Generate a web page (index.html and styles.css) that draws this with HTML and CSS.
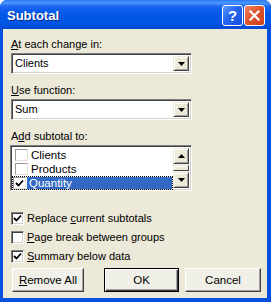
FILE: index.html
```html
<!DOCTYPE html>
<html lang="en">
<head>
  <meta charset="UTF-8" />
  <title>Subtotal</title>
  <link rel="stylesheet" href="styles.css">
</head>
<body>
  <div class="window">
    <div class="titlebar">
      <span class="title">Subtotal</span>
      <div class="title-buttons">
        <span class="tbtn help">?</span>
        <span class="tbtn close">
          <svg width="11" height="11" viewBox="0 0 11 11"><path d="M1.5 1.5 L9.5 9.5 M9.5 1.5 L1.5 9.5" stroke="#fff" stroke-width="2.2" stroke-linecap="square" fill="none"/></svg>
        </span>
      </div>
    </div>

    <div class="dialog">
      <div class="field-label first"><u>A</u>t each change in:</div>
      <div class="combo">
        <span class="combo-text">Clients</span>
        <span class="combo-arrow"><svg width="7" height="4" viewBox="0 0 7 4"><path d="M0 0 H7 L3.5 4 Z" fill="#000"/></svg></span>
      </div>

      <div class="field-label"><u>U</u>se function:</div>
      <div class="combo">
        <span class="combo-text">Sum</span>
        <span class="combo-arrow"><svg width="7" height="4" viewBox="0 0 7 4"><path d="M0 0 H7 L3.5 4 Z" fill="#000"/></svg></span>
      </div>

      <div class="field-label">A<u>d</u>d subtotal to:</div>
      <div class="listbox">
        <div class="list-items">
          <div class="list-row"><span class="lbox"></span><span class="item-text">Clients</span></div>
          <div class="list-row"><span class="lbox"></span><span class="item-text">Products</span></div>
          <div class="list-row selected">
            <span class="lbox"><svg width="9" height="9" viewBox="0 0 9 9"><path d="M1 4 L3.5 6.5 L8 1.5" stroke="#000" stroke-width="1.8" fill="none"/></svg></span>
            <span class="item-text">Quantity</span>
          </div>
        </div>
        <div class="scrollbar">
          <span class="sb-btn"><svg width="7" height="4" viewBox="0 0 7 4"><path d="M0 4 H7 L3.5 0 Z" fill="#000"/></svg></span>
          <span class="sb-track"><span class="sb-thumb"></span></span>
          <span class="sb-btn"><svg width="7" height="4" viewBox="0 0 7 4"><path d="M0 0 H7 L3.5 4 Z" fill="#000"/></svg></span>
        </div>
      </div>

      <div class="options">
        <div class="option">
          <span class="cbox"><svg width="9" height="9" viewBox="0 0 9 9"><path d="M1 4 L3.5 6.5 L8 1.5" stroke="#000" stroke-width="1.8" fill="none"/></svg></span>
          <span class="option-text">Replace <u>c</u>urrent subtotals</span>
        </div>
        <div class="option">
          <span class="cbox"></span>
          <span class="option-text"><u>P</u>age break between groups</span>
        </div>
        <div class="option">
          <span class="cbox"><svg width="9" height="9" viewBox="0 0 9 9"><path d="M1 4 L3.5 6.5 L8 1.5" stroke="#000" stroke-width="1.8" fill="none"/></svg></span>
          <span class="option-text"><u>S</u>ummary below data</span>
        </div>
      </div>

      <div class="button-row">
        <span class="button remove"><span><u>R</u>emove All</span></span>
        <span class="button ok default">OK</span>
        <span class="button cancel">Cancel</span>
      </div>
    </div>
  </div>
</body>
</html>
```

FILE: styles.css
```css
* {
  box-sizing: border-box;
  margin: 0;
  padding: 0;
}

html, body {
  width: 271px;
  height: 302px;
  background: #fff;
  overflow: hidden;
  font-family: 'Liberation Sans', Arial, sans-serif;
  font-size: 11px;
  color: #000;
}

.window {
  width: 271px;
  height: 302px;
  display: flex;
  flex-direction: column;
  background: #0451e0;
  border-radius: 7px 7px 0 0;
}

.titlebar {
  height: 29px;
  flex: none;
  display: flex;
  align-items: center;
  justify-content: space-between;
  padding: 0 6px 0 7px;
  border-radius: 7px 7px 0 0;
  background: linear-gradient(#2a7af5 0%, #4b97fb 10%, #1a66ef 22%, #0459e8 45%, #0255e4 80%, #0148d2 100%);
}

.title {
  font-weight: bold;
  font-size: 13px;
  color: #fff;
  text-shadow: 1px 1px #0c2c8a;
  padding-top: 1px;
}

.title-buttons {
  display: flex;
  gap: 1px;
  padding-top: 2px;
}

.tbtn {
  width: 21px;
  height: 21px;
  border: 1px solid #fff;
  border-radius: 3px;
  display: flex;
  align-items: center;
  justify-content: center;
  color: #fff;
}

.tbtn.help {
  background: linear-gradient(135deg, #5d9bfb 0%, #2465ef 45%, #1650dc 100%);
  font-weight: bold;
  font-size: 15px;
}

.tbtn.close {
  background: linear-gradient(135deg, #f08a62 0%, #e0542d 45%, #c9401c 100%);
}

.dialog {
  flex: 1;
  margin: 0 4px 4px 3px;
  background: #ece9d8;
  padding: 9px 6px 0 8px;
}

.field-label {
  line-height: 13px;
  height: 13px;
  margin-top: 10px;
  margin-bottom: 2px;
}

.field-label.first {
  margin-top: 0;
}

.combo {
  width: 181px;
  height: 21px;
  display: flex;
  align-items: stretch;
  background: #fff;
  border: 1px solid;
  border-color: #808080 #fff #fff #808080;
  box-shadow: inset 1px 1px #404040, inset -1px -1px #d4d0c8;
  padding: 2px;
}

.combo-text {
  flex: 1;
  padding-left: 1px;
  line-height: 15px;
}

.combo-arrow,
.sb-btn {
  width: 16px;
  flex: none;
  display: flex;
  align-items: center;
  justify-content: center;
  background: #ece9d8;
  border: 1px solid;
  border-color: #ece9d8 #404040 #404040 #ece9d8;
  box-shadow: inset 1px 1px #fff, inset -1px -1px #a0a0a0;
}

.listbox {
  width: 182px;
  height: 46px;
  margin-left: -1px;
  display: flex;
  background: #fff;
  border: 1px solid;
  border-color: #808080 #fff #fff #808080;
  box-shadow: inset 1px 1px #404040, inset -1px -1px #d4d0c8;
  padding: 2px;
}

.list-items {
  flex: 1;
  display: flex;
  flex-direction: column;
}

.list-row {
  height: 14px;
  display: flex;
  align-items: center;
  padding-left: 1px;
  border: 1px dotted transparent;
}

.list-row.selected {
  border-color: #000;
  padding-left: 0;
  margin-left: -1px;
}

.lbox {
  width: 13px;
  height: 12px;
  flex: none;
  background: #fff;
  border: 1px solid;
  border-color: #9a9a9a #e4e2d8 #e4e2d8 #9a9a9a;
  display: flex;
  align-items: center;
  justify-content: center;
}

.item-text {
  flex: 1;
  height: 12px;
  line-height: 12px;
  padding-left: 2px;
  margin-left: 1px;
  font-size: 11.5px;
}

.selected .item-text {
  background: #316ac5;
  color: #fff;
}

.scrollbar {
  width: 16px;
  flex: none;
  display: flex;
  flex-direction: column;
}

.sb-btn {
  height: 16px;
}

.sb-track {
  flex: 1;
  background: #f4f3ee;
  display: flex;
}

.sb-thumb {
  flex: 1;
  margin: 1px 0;
  background: #ece9d8;
  border: 1px solid;
  border-color: #ece9d8 #404040 #404040 #ece9d8;
  box-shadow: inset 1px 1px #fff;
}

.options {
  margin-top: 21px;
  display: flex;
  flex-direction: column;
  gap: 6px;
}

.option {
  height: 13px;
  display: flex;
  align-items: center;
  gap: 3px;
}

.option-text {
  line-height: 13px;
  white-space: pre;
}

.cbox {
  width: 13px;
  height: 13px;
  flex: none;
  background: #fff;
  border: 1px solid;
  border-color: #808080 #fff #fff #808080;
  box-shadow: inset 1px 1px #404040, inset -1px -1px #d4d0c8;
  display: flex;
  align-items: center;
  justify-content: center;
}

.button-row {
  margin-top: 5px;
  display: flex;
  gap: 6px;
  padding-left: 1px;
}

.button {
  width: 72px;
  height: 24px;
  display: flex;
  align-items: center;
  justify-content: center;
  font-size: 11.5px;
  background: #f0efe8;
  border: 1px solid;
  border-color: #fff #404040 #404040 #fff;
  box-shadow: inset -1px -1px #a0a0a0;
}

.button.ok {
  margin-left: auto;
  width: 75px;
}

.button.cancel {
  width: 76px;
}

.button.default {
  border: 1px solid #000;
  box-shadow: inset 1px 1px #fff, inset -1px -1px #404040, inset -2px -2px #a0a0a0;
}
```
